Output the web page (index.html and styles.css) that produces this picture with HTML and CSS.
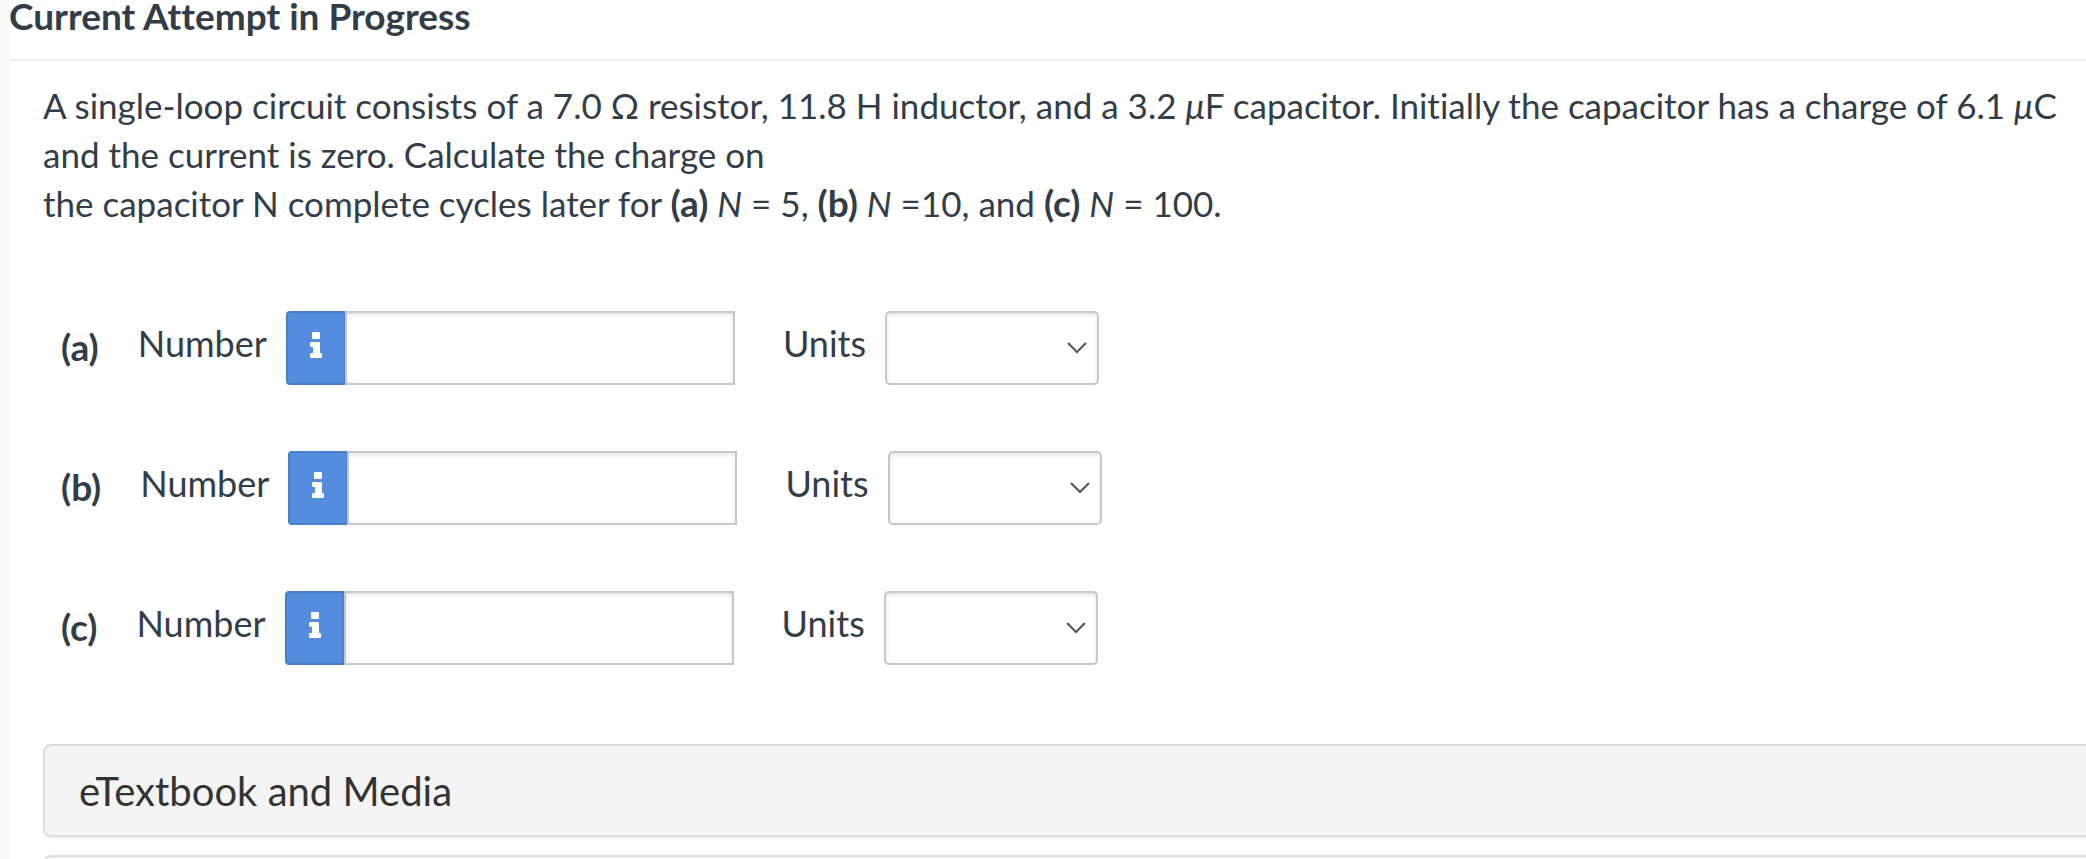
FILE: index.html
```html
<!DOCTYPE html>
<html lang="en">

<head>
    <meta charset="UTF-8">
    <meta name="viewport" content="width=device-width, initial-scale=1.0">
    <title>Current Attempt in Progress</title>
    <link rel="stylesheet" href="styles.css">
</head>

<body>
    <main class="question">
        <h1 class="question-header">Current Attempt in Progress</h1>

        <div class="question-body">
            <p class="question-text">
                A single-loop circuit consists of a 7.0 Ω resistor, 11.8 H inductor, and a 3.2 <em>μ</em>F capacitor.
                Initially the capacitor has a charge of 6.1 <em>μ</em>C and the current is zero. Calculate the charge on<br>
                the capacitor N complete cycles later for <strong>(a)</strong> <em>N</em> = 5, <strong>(b)</strong>
                <em>N</em> =10, and <strong>(c)</strong> <em>N</em> = 100.
            </p>

            <form class="answers">
                <div class="answer-row">
                    <strong class="part">(a)</strong>
                    <label class="number-label" for="number-a">Number</label>
                    <div class="number-group">
                        <button class="info" type="button" aria-label="Information about part a">
                            <svg class="info-icon" viewBox="0 0 12 26">
                                <rect x="2" y="0" width="8" height="7" rx="1" />
                                <path d="M1 10h8q1 0 1 1v10h1q1 0 1 1v3q0 1-1 1H1q-1 0-1-1v-3q0-1 1-1h2v-6H1q-1 0-1-1v-3q0-1 1-1z" />
                            </svg>
                        </button>
                        <input class="number-input" id="number-a" type="text">
                    </div>
                    <label class="units-label" for="units-a">Units</label>
                    <div class="units-group">
                        <select class="units-select" id="units-a">
                            <option></option>
                        </select>
                        <svg class="chevron" viewBox="0 0 20 12">
                            <path d="M1 1l9 9 9-9" />
                        </svg>
                    </div>
                </div>

                <div class="answer-row">
                    <strong class="part">(b)</strong>
                    <label class="number-label" for="number-b">Number</label>
                    <div class="number-group">
                        <button class="info" type="button" aria-label="Information about part b">
                            <svg class="info-icon" viewBox="0 0 12 26">
                                <rect x="2" y="0" width="8" height="7" rx="1" />
                                <path d="M1 10h8q1 0 1 1v10h1q1 0 1 1v3q0 1-1 1H1q-1 0-1-1v-3q0-1 1-1h2v-6H1q-1 0-1-1v-3q0-1 1-1z" />
                            </svg>
                        </button>
                        <input class="number-input" id="number-b" type="text">
                    </div>
                    <label class="units-label" for="units-b">Units</label>
                    <div class="units-group">
                        <select class="units-select" id="units-b">
                            <option></option>
                        </select>
                        <svg class="chevron" viewBox="0 0 20 12">
                            <path d="M1 1l9 9 9-9" />
                        </svg>
                    </div>
                </div>

                <div class="answer-row">
                    <strong class="part">(c)</strong>
                    <label class="number-label" for="number-c">Number</label>
                    <div class="number-group">
                        <button class="info" type="button" aria-label="Information about part c">
                            <svg class="info-icon" viewBox="0 0 12 26">
                                <rect x="2" y="0" width="8" height="7" rx="1" />
                                <path d="M1 10h8q1 0 1 1v10h1q1 0 1 1v3q0 1-1 1H1q-1 0-1-1v-3q0-1 1-1h2v-6H1q-1 0-1-1v-3q0-1 1-1z" />
                            </svg>
                        </button>
                        <input class="number-input" id="number-c" type="text">
                    </div>
                    <label class="units-label" for="units-c">Units</label>
                    <div class="units-group">
                        <select class="units-select" id="units-c">
                            <option></option>
                        </select>
                        <svg class="chevron" viewBox="0 0 20 12">
                            <path d="M1 1l9 9 9-9" />
                        </svg>
                    </div>
                </div>
            </form>

            <div class="resources">
                <button class="resource" type="button">eTextbook and Media</button>
                <div class="resource"></div>
            </div>
        </div>
    </main>
</body>

</html>
```

FILE: styles.css
```css
* {
    box-sizing: border-box;
}

html {
    height: 100%;
}

body {
    margin: 0;
    height: 100%;
    overflow: hidden;
    background-color: #fafafa;
    color: #333d47;
    font-family: Lato, sans-serif;
    font-size: 36px;
    font-variant-ligatures: none;
    line-height: 49px;
}

.question {
    height: 100%;
    margin-left: 9px;
    overflow: hidden;
    background: #fff;
}

.question-header {
    margin: 0;
    padding-bottom: 27px;
    border-bottom: 2px solid #eee;
    font-size: 37px;
    line-height: 32px;
}

.question-body {
    padding: 20px 0 0 34px;
}

.question-text {
    margin: 0;
    font-size: 35px;
}

strong {
    font-size: 37px;
    line-height: 1;
}

.answers {
    display: flex;
    flex-direction: column;
    gap: 66px;
    margin: 83px 0 79px;
    padding-left: 18px;
}

.answer-row {
    display: flex;
    align-items: center;
}

.part {
    margin-right: 39px;
    padding-bottom: 3px;
}

.number-label,
.units-label {
    margin-right: 19px;
    padding-bottom: 9px;
}

.number-group {
    display: flex;
    margin-right: 48px;
}

.info {
    display: flex;
    justify-content: center;
    align-items: center;
    width: 59px;
    height: 74px;
    padding: 0;
    border: 2px solid #467fca;
    border-right-width: 1px;
    border-radius: 4px 0 0 4px;
    background: #548ddd;
    cursor: pointer;
}

.info-icon {
    width: 12px;
    height: 26px;
    margin-bottom: 6px;
    fill: #fff;
}

.number-input,
.units-select {
    height: 74px;
    margin: 0;
    padding: 0 12px;
    border: 2px solid #c7c7c7;
    background: #fff;
    box-shadow: inset 0 2px 4px rgba(0, 0, 0, 0.1);
    color: inherit;
    font: inherit;
}

.number-input {
    width: 390px;
    border-radius: 0;
}

.units-group {
    display: grid;
    align-items: center;
}

.units-select {
    grid-area: 1 / 1;
    width: 214px;
    border-radius: 5px;
    appearance: none;
}

.chevron {
    grid-area: 1 / 1;
    justify-self: end;
    width: 20px;
    height: 12px;
    margin-right: 12px;
    fill: none;
    stroke: #555;
    stroke-width: 2;
    pointer-events: none;
}

.resources {
    display: flex;
    flex-direction: column;
    gap: 18px;
}

/* panels run past the right edge of the window */
.resource {
    min-height: 93px;
    margin: 0 -8px 0 0;
    padding: 0 34px;
    border: 2px solid #ddd;
    border-radius: 8px;
    background: #f4f4f4;
    box-shadow: 0 2px 2px rgba(0, 0, 0, 0.05);
    color: #333;
    font-family: inherit;
    font-size: 40px;
    text-align: left;
}
```
